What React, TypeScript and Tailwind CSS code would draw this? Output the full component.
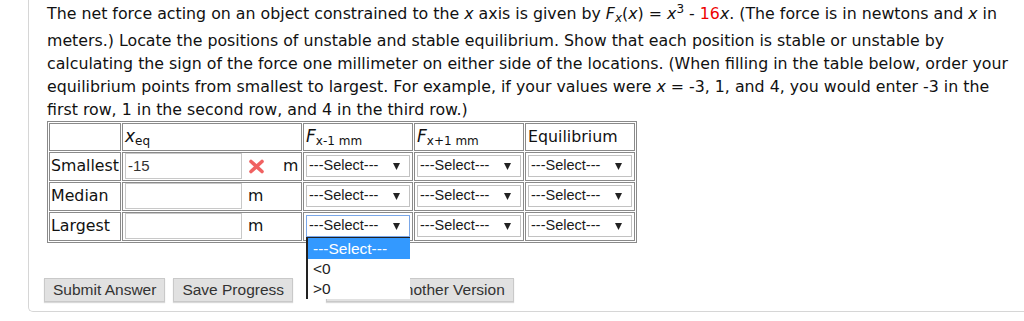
import React from "react";

const verdana = "font-['DejaVu_Sans',Verdana,sans-serif]";
const arial = "font-['Liberation_Sans',Arial,sans-serif]";

export default function App() {
  return (
    <div className={`relative h-[321px] w-[1024px] overflow-hidden bg-white text-[15.8px] text-[#111] ${verdana}`}>
      <div className="ml-[28px] h-[312px] rounded-bl-[5px] border-b border-l border-[#d6d6d6] pl-[18px] pt-[2px]">
        <p className="leading-[23px]">
          <span className="mb-[4px] block">
            The net force acting on an object constrained to the <i>x</i> axis is given by <i>F</i>
            <sub className="text-[12px] italic">x</sub>(<i>x</i>) = <i>x</i>
            <sup className="text-[12px]">3</sup> - <span className="text-[#e00]">16</span>
            <i>x</i>. (The force is in newtons and <i>x</i> in
          </span>
          meters.) Locate the positions of unstable and stable equilibrium. Show that each position is stable or unstable by
          <br />
          calculating the sign of the force one millimeter on either side of the locations. (When filling in the table below, order your
          <br />
          equilibrium points from smallest to largest. For example, if your values were <i>x</i> = -3, 1, and 4, you would enter -3 in the
          <br />
          first row, 1 in the second row, and 4 in the third row.)
        </p>
        <AnswerTable />
        <div className="ml-[-3px] mt-[35px] flex items-center">
          <Button label="Submit Answer" />
          <div className="ml-[8px]">
            <Button label="Save Progress" />
          </div>
          <div className="ml-[33px]">
            <Button label="Practice Another Version" />
          </div>
        </div>
      </div>
    </div>
  );
}

function AnswerTable() {
  const rows = [
    { label: "Smallest", value: "-15", wrong: true },
    { label: "Median", value: "", wrong: false },
    { label: "Largest", value: "", wrong: false },
  ];

  return (
    <table className="border-separate border-spacing-[1px] border border-[#8a8a8a]">
      <tbody>
        <tr className="h-[24px]">
          <td className="w-[72px] border border-[#8a8a8a]" />
          <td className="w-[180px] border border-[#8a8a8a] px-[2px]">
            <i className="text-[17px]">x</i>
            <sub className="text-[12px]">eq</sub>
          </td>
          <td className="w-[110px] border border-[#8a8a8a] px-[2px]">
            <i className="text-[17px]">F</i>
            <sub className="text-[12px]">x-1 mm</sub>
          </td>
          <td className="w-[110px] border border-[#8a8a8a] px-[2px]">
            <i className="text-[17px]">F</i>
            <sub className="text-[12px]">x+1 mm</sub>
          </td>
          <td className="w-[110px] border border-[#8a8a8a] px-[2px]">Equilibrium</td>
        </tr>
        {rows.map((row, index) => (
          <tr key={row.label} className="h-[29px]">
            <td className="border border-[#8a8a8a] px-[1px]">{row.label}</td>
            <td className="border border-[#8a8a8a] px-[2px]">
              <div className="flex items-center">
                <div className={`h-[26px] w-[117px] border border-[#c8c8c8] px-[2px] text-[15px] leading-[24px] text-[#333] ${arial}`}>
                  {row.value}
                </div>
                {row.wrong ? (
                  <span className="ml-[6px] flex w-[35px] items-center">
                    <XMark />
                  </span>
                ) : (
                  <span className="ml-[6px]" />
                )}
                <span>m</span>
              </div>
            </td>
            <td className="border border-[#8a8a8a] pl-[2px]">
              <div className="relative">
                <Select focused={index === 2} />
                {index === 2 && <OpenList />}
              </div>
            </td>
            <td className="border border-[#8a8a8a] pl-[2px]">
              <Select />
            </td>
            <td className="border border-[#8a8a8a] pl-[2px]">
              <Select />
            </td>
          </tr>
        ))}
      </tbody>
    </table>
  );
}

function Select({ focused = false }: { focused?: boolean }) {
  return (
    <div
      className={`flex h-[22px] w-[104px] items-center justify-between border bg-white pl-[2px] pr-[9px] text-[14.5px] text-[#1a1a1a] ${arial} ${
        focused ? "border-[#7aa7e8]" : "border-[#c2c2c2]"
      }`}
    >
      <span>---Select---</span>
      <svg width="7" height="7" viewBox="0 0 7 7">
        <path d="M0 0 H7 L3.5 7 Z" fill="#222" />
      </svg>
    </div>
  );
}

function OpenList() {
  return (
    <div className={`absolute left-0 top-full z-10 w-[104px] border-l-2 border-t border-[#222] bg-white text-[15.5px] text-[#222] ${arial}`}>
      <div className="h-[21px] bg-[#3399ff] pl-[5px] leading-[21px] text-white">---Select---</div>
      <div className="h-[20px] pl-[5px] leading-[20px]">&lt;0</div>
      <div className="h-[20px] pl-[5px] leading-[20px]">&gt;0</div>
    </div>
  );
}

function XMark() {
  return (
    <svg width="17" height="15" viewBox="0 0 17 15">
      <path d="M3 2.5 L14 12.5 M14 2.5 L3 12.5" stroke="#f06262" strokeWidth="3.6" strokeLinecap="round" />
    </svg>
  );
}

function Button({ label }: { label: string }) {
  return (
    <button className={`h-[24px] border border-[#c9c9c9] bg-[#e1e1e1] px-[8px] text-[15.5px] leading-[22px] text-[#333] shadow-[0_1px_1px_rgba(0,0,0,0.15)] ${arial}`}>
      {label}
    </button>
  );
}
